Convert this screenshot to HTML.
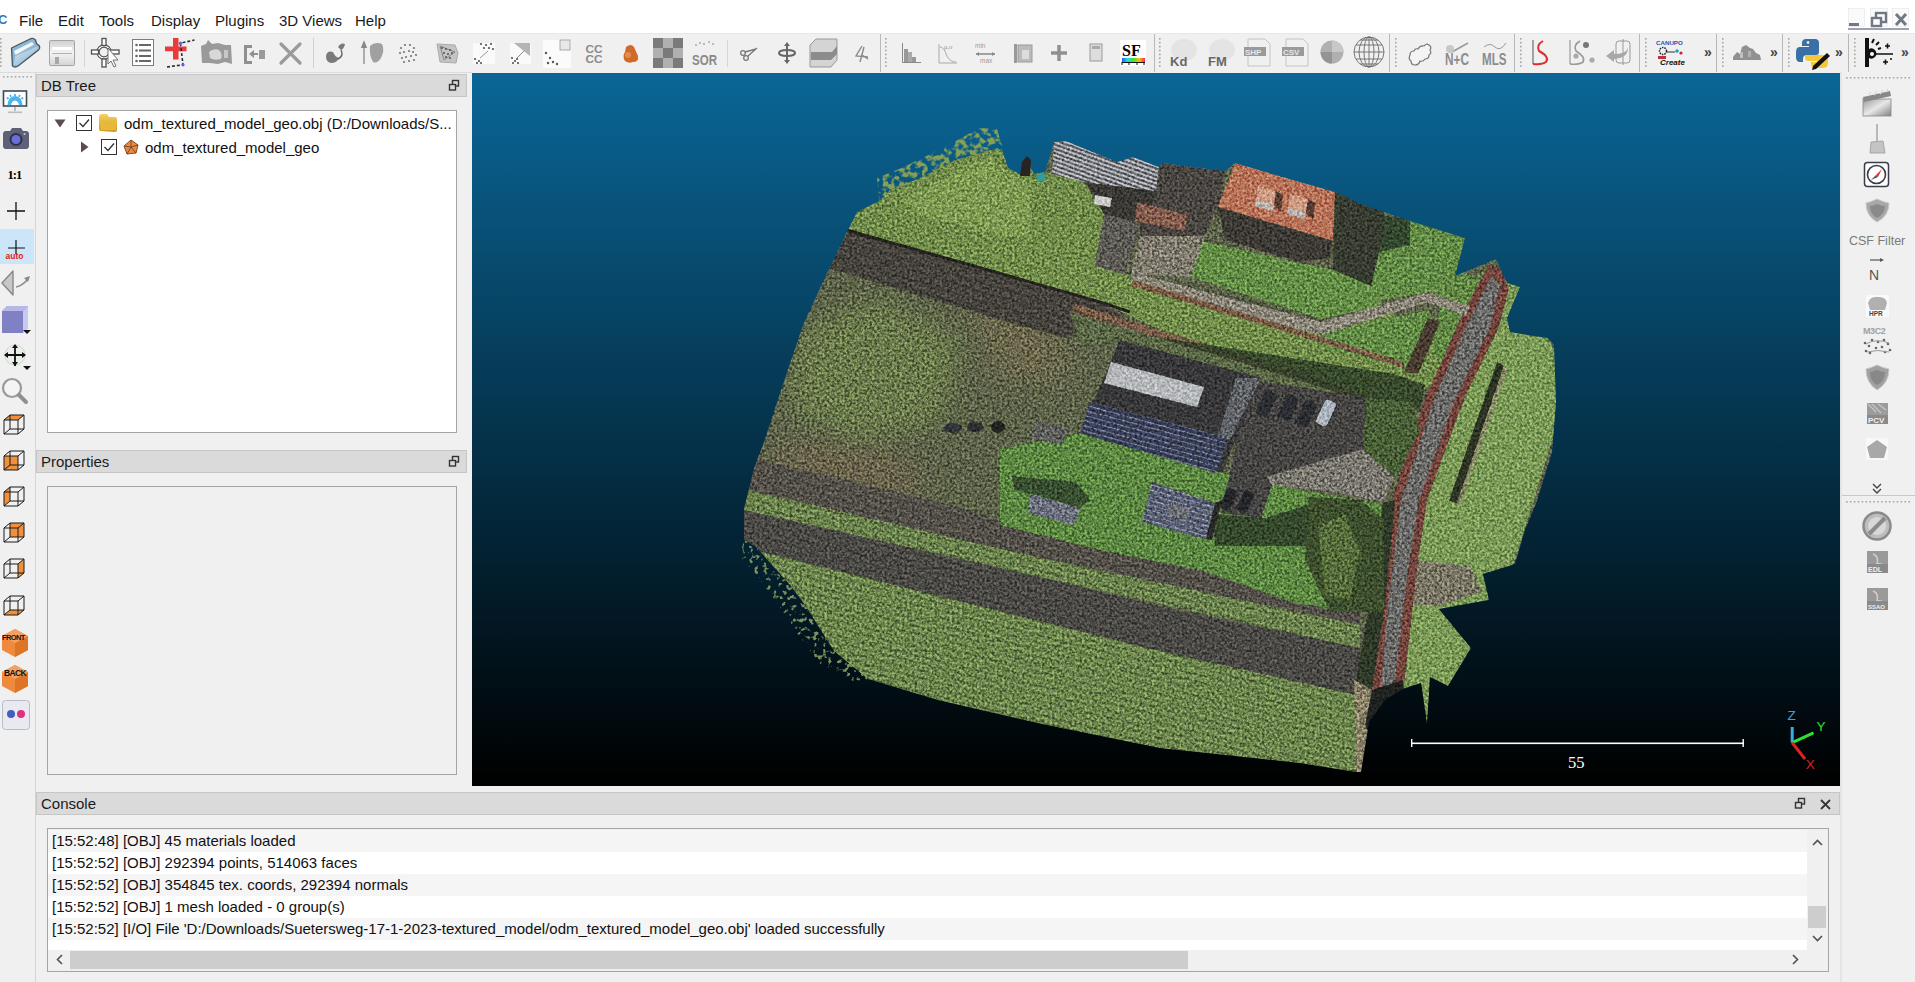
<!DOCTYPE html><html><head><meta charset="utf-8"><style>
html,body{margin:0;padding:0;}
body{width:1915px;height:982px;position:relative;overflow:hidden;background:#f0f0f0;font-family:"Liberation Sans",sans-serif;font-size:15px;color:#000;}
.t{position:absolute;white-space:nowrap;line-height:18px;}
svg{overflow:visible}
</style></head><body>

<div style="position:absolute;left:0px;top:0px;width:1915px;height:33px;background:#fff"></div>
<div class="t" style="left:19px;top:12px;color:#1a1a1a">File</div>
<div class="t" style="left:58px;top:12px;color:#1a1a1a">Edit</div>
<div class="t" style="left:99px;top:12px;color:#1a1a1a">Tools</div>
<div class="t" style="left:151px;top:12px;color:#1a1a1a">Display</div>
<div class="t" style="left:215px;top:12px;color:#1a1a1a">Plugins</div>
<div class="t" style="left:279px;top:12px;color:#1a1a1a">3D Views</div>
<div class="t" style="left:355px;top:12px;color:#1a1a1a">Help</div>
<div style="position:absolute;left:0px;top:33px;width:1915px;height:39px;background:#f0f0f0;border-top:1px solid #e8e8e8;box-sizing:border-box"></div>
<svg style="position:absolute;left:0;top:0" width="1915" height="72" viewBox="0 0 1915 72"><rect x="0" y="38" width="1.6" height="1.6" fill="#a4a4a4"/><rect x="0" y="41.9" width="1.6" height="1.6" fill="#a4a4a4"/><rect x="0" y="45.8" width="1.6" height="1.6" fill="#a4a4a4"/><rect x="0" y="49.699999999999996" width="1.6" height="1.6" fill="#a4a4a4"/><rect x="0" y="53.599999999999994" width="1.6" height="1.6" fill="#a4a4a4"/><rect x="0" y="57.49999999999999" width="1.6" height="1.6" fill="#a4a4a4"/><rect x="0" y="61.39999999999999" width="1.6" height="1.6" fill="#a4a4a4"/><rect x="0" y="65.3" width="1.6" height="1.6" fill="#a4a4a4"/><rect x="84" y="40" width="1" height="27" fill="#d4d4d4"/><rect x="313" y="38" width="1" height="30" fill="#d0d0d0"/><rect x="727" y="40" width="1" height="27" fill="#d4d4d4"/><rect x="880" y="34" width="1" height="38" fill="#b8b8b8"/><rect x="885" y="38" width="1.6" height="1.6" fill="#a4a4a4"/><rect x="885" y="41.9" width="1.6" height="1.6" fill="#a4a4a4"/><rect x="885" y="45.8" width="1.6" height="1.6" fill="#a4a4a4"/><rect x="885" y="49.699999999999996" width="1.6" height="1.6" fill="#a4a4a4"/><rect x="885" y="53.599999999999994" width="1.6" height="1.6" fill="#a4a4a4"/><rect x="885" y="57.49999999999999" width="1.6" height="1.6" fill="#a4a4a4"/><rect x="885" y="61.39999999999999" width="1.6" height="1.6" fill="#a4a4a4"/><rect x="885" y="65.3" width="1.6" height="1.6" fill="#a4a4a4"/><rect x="1154" y="34" width="1" height="38" fill="#b8b8b8"/><rect x="1159" y="38" width="1.6" height="1.6" fill="#a4a4a4"/><rect x="1159" y="41.9" width="1.6" height="1.6" fill="#a4a4a4"/><rect x="1159" y="45.8" width="1.6" height="1.6" fill="#a4a4a4"/><rect x="1159" y="49.699999999999996" width="1.6" height="1.6" fill="#a4a4a4"/><rect x="1159" y="53.599999999999994" width="1.6" height="1.6" fill="#a4a4a4"/><rect x="1159" y="57.49999999999999" width="1.6" height="1.6" fill="#a4a4a4"/><rect x="1159" y="61.39999999999999" width="1.6" height="1.6" fill="#a4a4a4"/><rect x="1159" y="65.3" width="1.6" height="1.6" fill="#a4a4a4"/><rect x="1389" y="34" width="1" height="38" fill="#b8b8b8"/><rect x="1395" y="38" width="1.6" height="1.6" fill="#a4a4a4"/><rect x="1395" y="41.9" width="1.6" height="1.6" fill="#a4a4a4"/><rect x="1395" y="45.8" width="1.6" height="1.6" fill="#a4a4a4"/><rect x="1395" y="49.699999999999996" width="1.6" height="1.6" fill="#a4a4a4"/><rect x="1395" y="53.599999999999994" width="1.6" height="1.6" fill="#a4a4a4"/><rect x="1395" y="57.49999999999999" width="1.6" height="1.6" fill="#a4a4a4"/><rect x="1395" y="61.39999999999999" width="1.6" height="1.6" fill="#a4a4a4"/><rect x="1395" y="65.3" width="1.6" height="1.6" fill="#a4a4a4"/><rect x="1514" y="34" width="1" height="38" fill="#b8b8b8"/><rect x="1520" y="38" width="1.6" height="1.6" fill="#a4a4a4"/><rect x="1520" y="41.9" width="1.6" height="1.6" fill="#a4a4a4"/><rect x="1520" y="45.8" width="1.6" height="1.6" fill="#a4a4a4"/><rect x="1520" y="49.699999999999996" width="1.6" height="1.6" fill="#a4a4a4"/><rect x="1520" y="53.599999999999994" width="1.6" height="1.6" fill="#a4a4a4"/><rect x="1520" y="57.49999999999999" width="1.6" height="1.6" fill="#a4a4a4"/><rect x="1520" y="61.39999999999999" width="1.6" height="1.6" fill="#a4a4a4"/><rect x="1520" y="65.3" width="1.6" height="1.6" fill="#a4a4a4"/><rect x="1639" y="34" width="1" height="38" fill="#b8b8b8"/><rect x="1645" y="38" width="1.6" height="1.6" fill="#a4a4a4"/><rect x="1645" y="41.9" width="1.6" height="1.6" fill="#a4a4a4"/><rect x="1645" y="45.8" width="1.6" height="1.6" fill="#a4a4a4"/><rect x="1645" y="49.699999999999996" width="1.6" height="1.6" fill="#a4a4a4"/><rect x="1645" y="53.599999999999994" width="1.6" height="1.6" fill="#a4a4a4"/><rect x="1645" y="57.49999999999999" width="1.6" height="1.6" fill="#a4a4a4"/><rect x="1645" y="61.39999999999999" width="1.6" height="1.6" fill="#a4a4a4"/><rect x="1645" y="65.3" width="1.6" height="1.6" fill="#a4a4a4"/><rect x="1716" y="34" width="1" height="38" fill="#b8b8b8"/><rect x="1722" y="38" width="1.6" height="1.6" fill="#a4a4a4"/><rect x="1722" y="41.9" width="1.6" height="1.6" fill="#a4a4a4"/><rect x="1722" y="45.8" width="1.6" height="1.6" fill="#a4a4a4"/><rect x="1722" y="49.699999999999996" width="1.6" height="1.6" fill="#a4a4a4"/><rect x="1722" y="53.599999999999994" width="1.6" height="1.6" fill="#a4a4a4"/><rect x="1722" y="57.49999999999999" width="1.6" height="1.6" fill="#a4a4a4"/><rect x="1722" y="61.39999999999999" width="1.6" height="1.6" fill="#a4a4a4"/><rect x="1722" y="65.3" width="1.6" height="1.6" fill="#a4a4a4"/><rect x="1782" y="34" width="1" height="38" fill="#b8b8b8"/><rect x="1788" y="38" width="1.6" height="1.6" fill="#a4a4a4"/><rect x="1788" y="41.9" width="1.6" height="1.6" fill="#a4a4a4"/><rect x="1788" y="45.8" width="1.6" height="1.6" fill="#a4a4a4"/><rect x="1788" y="49.699999999999996" width="1.6" height="1.6" fill="#a4a4a4"/><rect x="1788" y="53.599999999999994" width="1.6" height="1.6" fill="#a4a4a4"/><rect x="1788" y="57.49999999999999" width="1.6" height="1.6" fill="#a4a4a4"/><rect x="1788" y="61.39999999999999" width="1.6" height="1.6" fill="#a4a4a4"/><rect x="1788" y="65.3" width="1.6" height="1.6" fill="#a4a4a4"/><rect x="1848" y="34" width="1" height="38" fill="#b8b8b8"/><rect x="1854" y="38" width="1.6" height="1.6" fill="#a4a4a4"/><rect x="1854" y="41.9" width="1.6" height="1.6" fill="#a4a4a4"/><rect x="1854" y="45.8" width="1.6" height="1.6" fill="#a4a4a4"/><rect x="1854" y="49.699999999999996" width="1.6" height="1.6" fill="#a4a4a4"/><rect x="1854" y="53.599999999999994" width="1.6" height="1.6" fill="#a4a4a4"/><rect x="1854" y="57.49999999999999" width="1.6" height="1.6" fill="#a4a4a4"/><rect x="1854" y="61.39999999999999" width="1.6" height="1.6" fill="#a4a4a4"/><rect x="1854" y="65.3" width="1.6" height="1.6" fill="#a4a4a4"/><defs><linearGradient id="fold" x1="0" y1="0" x2="1" y2="1"><stop offset="0" stop-color="#d8e8f4"/><stop offset="1" stop-color="#86b0cc"/></linearGradient><linearGradient id="sav" x1="0" y1="0" x2="0" y2="1"><stop offset="0" stop-color="#d0d0d0"/><stop offset="0.5" stop-color="#f4f4f4"/><stop offset="1" stop-color="#d4d4d4"/></linearGradient></defs><path d="M11.5,48 L30,39 Q33,37.5 35.5,40 L36.5,43.5 L39.5,46 Q40.5,48 38.5,50 L18,66 Q15,68 12.5,66 Z" fill="#8fb6d2" stroke="#46545e" stroke-width="1.3" stroke-linejoin="round"/><path d="M14,51 L32,42 L34,44.5 L15.5,55 Z" fill="#f2f6f9"/><path d="M13.5,65 L15.5,56 L37,46.5 L38.5,48.5 L18,65 Z" fill="url(#fold)"/><rect x="49.5" y="40.5" width="25" height="25" rx="1" fill="url(#sav)" stroke="#a4a4a4"/><rect x="52" y="47" width="20" height="3" fill="#fff"/><rect x="52" y="53" width="20" height="1" fill="#b0b0b0"/><rect x="55" y="57" width="4" height="7" fill="#a8a8a8"/><g stroke="#505050" stroke-width="1.3" fill="#fff"><circle cx="104" cy="52" r="6" fill="none" stroke-width="3.4"/><circle cx="104" cy="52" r="6" fill="none" stroke="#fff" stroke-width="1.2"/><rect x="102" y="38.5" width="4" height="7" /><rect x="102" y="59" width="4" height="8"/><rect x="91.5" y="50" width="7" height="4"/><rect x="110" y="50" width="9" height="4"/></g><path d="M108,48 L108,64 L111,61 L114,67 L116,66 L113,60 L118,60 Z" fill="#fff" stroke="#707070" stroke-width="1"/><rect x="132.5" y="39.5" width="21" height="26" fill="#fff" stroke="#7c7c7c"/><circle cx="136.5" cy="45" r="1.3" fill="#666"/><rect x="139" y="44" width="12" height="2" fill="#666"/><circle cx="136.5" cy="50.5" r="1.3" fill="#666"/><rect x="139" y="49.5" width="12" height="2" fill="#666"/><circle cx="136.5" cy="56" r="1.3" fill="#666"/><rect x="139" y="55" width="12" height="2" fill="#666"/><circle cx="136.5" cy="61" r="1.3" fill="#666"/><rect x="139" y="60" width="12" height="2" fill="#666"/><path d="M173,38 h5.5 v8.4 h8 v4.8 h-8 v8.3 h-5.5 v-8.3 h-8 v-4.8 h8 Z" fill="#ea3b3b"/><path d="M167,67 L183,64.8 L180.4,43.2 L194.5,40" fill="none" stroke="#2a2a3a" stroke-width="1.6" stroke-dasharray="3,2"/><circle cx="183" cy="64.8" r="1.6" fill="#6060e0"/><circle cx="180.4" cy="43.2" r="1.6" fill="#6060e0"/><path d="M201,46 L206,44 L208,40 L212,44 L218,43 L225,45 L231,45 L232,64 L225,62 L218,64 L210,63 L202,63 Z" fill="#9a9a9a"/><path d="M209,52 Q213,48 219,50 Q223,54 221,59 Q214,61 210,58 Z" fill="#d8d8d8"/><rect x="224" y="50" width="4" height="8" fill="#c8c8c8"/><path d="M244,45 h8 v3 h-5 v13 h5 v3 h-8 Z" fill="#909090"/><path d="M249,54 l5,-4 v3 h4 v2 h-4 v3 Z" fill="#909090"/><rect x="259" y="50" width="6" height="9" fill="#9a9a9a"/><path d="M281,44 L300,63 M300,44 L281,63" stroke="#9a9a9a" stroke-width="3.2" stroke-linecap="round"/><path d="M326,56 Q327,50 333,52 Q335,57 339,58 Q337,63 331,63 Q326,62 326,56 Z" fill="#7a7a7a"/><path d="M338,47 Q341,42 345,44 Q344,49 341,50 Z" fill="#7a7a7a"/><path d="M341,50 Q344,56 338,59" fill="none" stroke="#666" stroke-width="1.4"/><path d="M364,64 V44 M361.5,48 L364,42 L366.5,48" stroke="#888" stroke-width="1.3" fill="#888"/><path d="M370,46 Q375,41 382,44 Q385,50 381,58 Q377,64 373,62 Q369,55 370,46 Z" fill="#a0a0a0"/><circle cx="401" cy="48" r="1.1" fill="#777"/><circle cx="405" cy="45" r="1.1" fill="#777"/><circle cx="410" cy="45" r="1.1" fill="#777"/><circle cx="414" cy="48" r="1.1" fill="#777"/><circle cx="400" cy="53" r="1.1" fill="#777"/><circle cx="404" cy="52" r="1.1" fill="#777"/><circle cx="409" cy="51" r="1.1" fill="#777"/><circle cx="413" cy="52" r="1.1" fill="#777"/><circle cx="416" cy="55" r="1.1" fill="#777"/><circle cx="402" cy="58" r="1.1" fill="#777"/><circle cx="406" cy="57" r="1.1" fill="#777"/><circle cx="411" cy="56" r="1.1" fill="#777"/><circle cx="404" cy="62" r="1.1" fill="#777"/><circle cx="409" cy="61" r="1.1" fill="#777"/><circle cx="414" cy="60" r="1.1" fill="#777"/><path d="M437,44 L455,45 L458,53 L456,63 L440,62 Z" fill="#c4c4c4" stroke="#aaa"/><path d="M440,46 L455,52 L444,60 Z" fill="none" stroke="#777" stroke-width="0.8"/><circle cx="442" cy="48" r="1" fill="#555"/><circle cx="446" cy="49" r="1" fill="#555"/><circle cx="450" cy="50" r="1" fill="#555"/><circle cx="444" cy="53" r="1" fill="#555"/><circle cx="448" cy="54" r="1" fill="#555"/><circle cx="452" cy="53" r="1" fill="#555"/><circle cx="446" cy="57" r="1" fill="#555"/><circle cx="450" cy="58" r="1" fill="#555"/><rect x="473" y="43" width="22" height="21" fill="#fafafa"/><circle cx="481" cy="44" r="1.1" fill="#555"/><circle cx="486" cy="45" r="1.1" fill="#555"/><circle cx="491" cy="44" r="1.1" fill="#555"/><circle cx="484" cy="48" r="1.1" fill="#555"/><circle cx="489" cy="48" r="1.1" fill="#555"/><circle cx="493" cy="49" r="1.1" fill="#555"/><circle cx="475" cy="59" r="1.1" fill="#555"/><circle cx="479" cy="61" r="1.1" fill="#555"/><circle cx="477" cy="63" r="1.1" fill="#555"/><circle cx="481" cy="63" r="1.1" fill="#555"/><path d="M480,58 L488,51" stroke="#999" stroke-width="1"/><rect x="510" y="43" width="21" height="21" fill="#fafafa"/><path d="M514,43 L530,43 L530,56 Z" fill="#b4b4b4"/><circle cx="512" cy="58" r="1.1" fill="#555"/><circle cx="515" cy="61" r="1.1" fill="#555"/><circle cx="513" cy="63" r="1.1" fill="#555"/><circle cx="518" cy="63" r="1.1" fill="#555"/><circle cx="517" cy="59" r="1.1" fill="#555"/><path d="M517,58 L524,51" stroke="#888" stroke-width="1"/><rect x="543" y="40" width="28" height="28" fill="#fbfbfb"/><rect x="560" y="40" width="10" height="10" fill="#e8e8e8" stroke="#999" stroke-width="0.8"/><circle cx="546" cy="53" r="1.2" fill="#555"/><circle cx="550" cy="58" r="1.2" fill="#555"/><circle cx="548" cy="63" r="1.2" fill="#555"/><circle cx="553" cy="62" r="1.2" fill="#555"/><circle cx="557" cy="64" r="1.2" fill="#555"/><text x="585.5" y="52.5" font-family="Liberation Sans" font-size="11.5" font-weight="bold" fill="#8a8a8a" textLength="17" lengthAdjust="spacingAndGlyphs">CC</text><text x="585.5" y="62.5" font-family="Liberation Sans" font-size="11.5" font-weight="bold" fill="#8a8a8a" textLength="17" lengthAdjust="spacingAndGlyphs">CC</text><path d="M626,47 Q631,43 634,47 L638,56 Q639,62 633,62 Q629,64 625,61 Q622,56 625,52 Z" fill="#d06a28"/><circle cx="628" cy="55" r="3" fill="#e88a48"/><rect x="653" y="38" width="10" height="10" fill="#7a7a7a"/><rect x="653" y="48" width="10" height="10" fill="#b0b0b0"/><rect x="653" y="58" width="10" height="10" fill="#7a7a7a"/><rect x="663" y="38" width="10" height="10" fill="#b0b0b0"/><rect x="663" y="48" width="10" height="10" fill="#7a7a7a"/><rect x="663" y="58" width="10" height="10" fill="#b0b0b0"/><rect x="673" y="38" width="10" height="10" fill="#7a7a7a"/><rect x="673" y="48" width="10" height="10" fill="#b0b0b0"/><rect x="673" y="58" width="10" height="10" fill="#7a7a7a"/><text x="692" y="65" font-family="Liberation Sans" font-size="15" font-weight="bold" fill="#8a8a8a" textLength="25" lengthAdjust="spacingAndGlyphs">SOR</text><circle cx="696" cy="45" r="1" fill="#aaa"/><circle cx="700" cy="43" r="1" fill="#aaa"/><circle cx="704" cy="44" r="1" fill="#aaa"/><circle cx="709" cy="42" r="1" fill="#aaa"/><circle cx="713" cy="44" r="1" fill="#aaa"/><g fill="none" stroke="#777" stroke-width="1.3"><circle cx="743" cy="53" r="2.3"/><circle cx="746" cy="58" r="2.3"/><path d="M745,52 L756,49 M748,56 L757,48"/></g><g stroke="#666" stroke-width="2" fill="none"><path d="M787,44 V62"/><ellipse cx="787" cy="53" rx="8" ry="3"/></g><path d="M784,46 L787,42 L790,46 Z M784,60 L787,64 L790,60 Z" fill="#666"/><path d="M810,45 L816,39 L837,39 L837,60 L831,67 L810,67 Z" fill="#d4d4d4" stroke="#999" stroke-width="1"/><path d="M810,56 L831,56 L837,50" fill="none" stroke="#999"/><path d="M811,52 L832,52 L837,46 L837,54 L831,60 L811,60 Z" fill="#8c8c8c"/><path d="M862,46 L856,56 L868,57 M860,62 L864,47 M862,55 L868,59" fill="none" stroke="#8a8a8a" stroke-width="1.4"/><path d="M902.5,43 V62.5 H921" stroke="#888" fill="none" stroke-width="1"/><rect x="904" y="49" width="4" height="13" fill="#999"/><rect x="908" y="52" width="4" height="10" fill="#aaa"/><rect x="912" y="57" width="4" height="5" fill="#999"/><path d="M939,44 V63 H957" stroke="#aaa" fill="none"/><path d="M940,47 Q944,47 947,56 Q950,62 956,62" fill="none" stroke="#aaa"/><text x="944" y="49" font-family="Liberation Serif" font-size="6.5" font-weight="normal" fill="#999" >μ,σ</text><text x="975" y="48" font-family="Liberation Sans" font-size="6.5" font-weight="normal" fill="#999" >min</text><text x="980" y="63" font-family="Liberation Sans" font-size="6.5" font-weight="normal" fill="#999" >max</text><path d="M976,54 H995" stroke="#888" stroke-width="1.5"/><path d="M976,54 l3,-2 v4 Z M995,54 l-3,-2 v4 Z" fill="#888"/><rect x="1014" y="44" width="3" height="19" fill="#999"/><rect x="1018" y="45" width="14" height="17" fill="#bbb" stroke="#999"/><rect x="1022" y="50" width="7" height="9" fill="#ddd"/><path d="M1059,45 V61 M1051,53 H1067" stroke="#909090" stroke-width="3.5"/><rect x="1090" y="44" width="12" height="17" fill="#ddd" stroke="#999"/><rect x="1092" y="46" width="8" height="3" fill="#aaa"/><rect x="1120" y="40" width="26" height="26" fill="#fff"/><text x="1122" y="56" font-family="Liberation Serif" font-size="16" font-weight="bold" fill="#000" >SF</text><defs><linearGradient id="rb"><stop offset="0" stop-color="#2060ff"/><stop offset="0.25" stop-color="#20e0e0"/><stop offset="0.5" stop-color="#40e040"/><stop offset="0.75" stop-color="#ffc000"/><stop offset="1" stop-color="#ff2060"/></linearGradient></defs><rect x="1122" y="58" width="23" height="4" fill="url(#rb)"/><path d="M1122,62 V65 M1129,62 V65 M1137,62 V65 M1144,62 V65 M1122,62.5 H1145" stroke="#111" stroke-width="1"/><ellipse cx="1184" cy="50" rx="13" ry="11" fill="#e4e4e4"/><text x="1170" y="66" font-family="Liberation Sans" font-size="13" font-weight="bold" fill="#686868" >Kd</text><ellipse cx="1222" cy="50" rx="13" ry="11" fill="#e4e4e4"/><text x="1208" y="66" font-family="Liberation Sans" font-size="13" font-weight="bold" fill="#686868" >FM</text><path d="M1248,39 h17 l5,5 v22 h-22 Z" fill="#f0f0f0" stroke="#c4c4c4"/><rect x="1244" y="47" width="22" height="9" fill="#9a9a9a"/><text x="1245" y="55" font-family="Liberation Sans" font-size="8" font-weight="bold" fill="#e8e8e8" >SHP</text><path d="M1286,39 h17 l5,5 v22 h-22 Z" fill="#f0f0f0" stroke="#c4c4c4"/><rect x="1282" y="47" width="22" height="9" fill="#9a9a9a"/><text x="1283" y="55" font-family="Liberation Sans" font-size="8" font-weight="bold" fill="#e8e8e8" >CSV</text><circle cx="1332" cy="52" r="11.5" fill="#b0b0b0"/><path d="M1332,52 L1332,40.5 A11.5,11.5 0 0 1 1343.5,52 Z" fill="#c8c8c8"/><path d="M1332,52 L1332,63.5 A11.5,11.5 0 0 1 1320.5,52 Z" fill="#949494"/><g fill="none" stroke="#6a6a6a" stroke-width="0.9"><circle cx="1369" cy="52" r="15"/><ellipse cx="1369" cy="52" rx="5" ry="15"/><ellipse cx="1369" cy="52" rx="10" ry="15"/><path d="M1369,37 V67 M1354,52 H1384 M1356,45 H1382 M1356,59 H1382 M1360,40 H1378 M1360,64 H1378"/></g><path d="M1410,55 q0,-4 4,-4 q1,-3 4,-2 q2,-4 6,-3 q2,-3 5,-1 q3,2 1,5 q2,3 -1,5 q0,4 -4,4 q-2,3 -5,2 q-1,4 -5,4 q-4,0 -4,-4 q-3,-2 -1,-6 Z" fill="#f4f4f4" stroke="#777" stroke-width="1.2"/><text x="1445" y="65" font-family="Liberation Sans" font-size="16" font-weight="bold" fill="#8c8c8c" textLength="24" lengthAdjust="spacingAndGlyphs">N+C</text><path d="M1452,52 L1468,43" stroke="#999" stroke-width="1.5"/><circle cx="1450" cy="49" r="4" fill="#c8c8c8"/><text x="1482" y="65" font-family="Liberation Sans" font-size="16" font-weight="bold" fill="#8c8c8c" textLength="24.5" lengthAdjust="spacingAndGlyphs">MLS</text><path d="M1484,47 Q1490,42 1495,47 T1506,43" fill="none" stroke="#999" stroke-width="1"/><path d="M1533,40 V64" stroke="#555" stroke-width="1"/><path d="M1543,41 Q1536,45 1539,51 Q1550,57 1546,62 Q1542,65 1533,64" fill="none" stroke="#d83030" stroke-width="2"/><path d="M1570,40 V64" stroke="#888" stroke-width="1"/><path d="M1580,41 Q1573,45 1576,51 Q1586,57 1583,62 Q1579,65 1570,64" fill="none" stroke="#999" stroke-width="1.6"/><circle cx="1586" cy="45" r="3" fill="#777"/><circle cx="1576" cy="56" r="2.6" fill="#aaa"/><circle cx="1592" cy="60" r="2.6" fill="#aaa"/><g fill="none" stroke="#999" stroke-width="1"><rect x="1616" y="41" width="14" height="22" rx="3"/><path d="M1623,39 V65"/></g><path d="M1606,56 L1614,50 L1614,54 Q1626,54 1628,48 Q1628,58 1614,59 L1614,62 Z" fill="#a8a8a8"/><text x="1656" y="45" font-family="Liberation Sans" font-size="6.2" font-weight="bold" fill="#3050b0" >CANUPO</text><circle cx="1663" cy="51" r="3.5" fill="none" stroke="#223" stroke-width="1.5" stroke-dasharray="1.5,1"/><path d="M1667,52 H1675" stroke="#333"/><circle cx="1677" cy="51" r="1.8" fill="#20a0c0"/><circle cx="1681" cy="53" r="1.6" fill="#d02040"/><rect x="1658" y="56" width="8" height="3" fill="#c03040"/><text x="1660" y="65" font-family="Liberation Sans" font-size="8" font-weight="bold" fill="#111" font-style="italic">Create</text><text x="1704" y="57" font-family="Liberation Sans" font-size="14" font-weight="bold" fill="#444" >»</text><path d="M1733,57 L1737,52 L1740,54 L1742,47 L1746,45 L1750,48 L1753,49 L1756,53 L1760,55 L1761,60 L1733,60 Z" fill="#909090"/><rect x="1740" y="52" width="3" height="6" fill="#c0c0c0"/><rect x="1748" y="51" width="3" height="6" fill="#b0b0b0"/><text x="1770" y="57" font-family="Liberation Sans" font-size="14" font-weight="bold" fill="#444" >»</text><path d="M1806,39 h9 q4,0 4,4 v9 q0,3 -3,3 h-9 q-4,0 -4,4 v3 h-3 q-4,0 -4,-5 v-5 q0,-5 4,-5 h9 v-1 h-7 v-3 q0,-4 4,-4 Z" fill="#3a70a8"/><circle cx="1808" cy="42.5" r="1.3" fill="#fff"/><path d="M1816,55 h7 q5,0 5,5 v3 q0,5 -5,5 h-8 q-4,0 -4,-4 v-2 h6 v-1 h-8 q-4,0 -4,-3 v-3 Z" fill="#f4c838"/><path d="M1813,66 L1827,53 L1830,56 L1816,69 L1812,70 Z" fill="#111"/><text x="1835" y="57" font-family="Liberation Sans" font-size="14" font-weight="bold" fill="#444" >»</text><path d="M1865,38 h4 v11 q3,-2 6,1 q3,4 0,7 q-3,3 -6,1 v9 h-4 Z" fill="#111"/><circle cx="1872" cy="54" r="2" fill="#fff"/><path d="M1876,54 H1893" stroke="#111" stroke-width="1.5"/><path d="M1872,43 l2,-4 M1876,45 l3,-3 M1878,49 l3,-1" stroke="#111" stroke-width="2"/><path d="M1885,46 h5 M1887.5,43.5 v5 M1883,62 h5 M1885.5,59.5 v5" stroke="#111" stroke-width="1.6"/><circle cx="1891" cy="59" r="1" fill="#111"/><text x="1901" y="57" font-family="Liberation Sans" font-size="14" font-weight="bold" fill="#444" >»</text></svg>
<div style="position:absolute;left:0px;top:72px;width:35px;height:910px;background:#f0f0f0"></div>
<div style="position:absolute;left:35px;top:72px;width:1px;height:910px;background:#d4d4d4"></div>
<div style="position:absolute;left:0px;top:72px;width:472px;height:1px;background:#dcdcdc"></div>
<svg style="position:absolute;left:0;top:0" width="36" height="982" viewBox="0 0 36 982"><rect x="3" y="76" width="1.6" height="1.6" fill="#a8a8a8"/><rect x="6.9" y="76" width="1.6" height="1.6" fill="#a8a8a8"/><rect x="10.8" y="76" width="1.6" height="1.6" fill="#a8a8a8"/><rect x="14.700000000000001" y="76" width="1.6" height="1.6" fill="#a8a8a8"/><rect x="18.6" y="76" width="1.6" height="1.6" fill="#a8a8a8"/><rect x="22.5" y="76" width="1.6" height="1.6" fill="#a8a8a8"/><rect x="26.4" y="76" width="1.6" height="1.6" fill="#a8a8a8"/><rect x="30.299999999999997" y="76" width="1.6" height="1.6" fill="#a8a8a8"/><rect x="3.5" y="91" width="23" height="15" fill="#fff" stroke="#3c4a5a" stroke-width="1.6"/><path d="M7.5,105 Q8,96.5 15,96 Q22,96.5 22.5,105 Z" fill="#4ab4ec"/><path d="M11,105 Q11.5,101 15,100.5 Q18.5,101 19,105 Z" fill="#fff"/><path d="M8.5,99 l-1.5,-1.5 M21.5,99 l1.5,-1.5 M15,96 v-2 M11,96.8 l-1,-1.8 M19,96.8 l1,-1.8" stroke="#4ab4ec" stroke-width="1.8"/><rect x="14" y="107" width="2" height="4" fill="#b8bcc4"/><rect x="8" y="111.5" width="14" height="1.6" fill="#b8bcc4"/><path d="M3,134 q0,-3 3,-3 h4 l2,-3 h9 l2,3 h3 q3,0 3,3 v12 q0,3 -3,3 h-20 q-3,0 -3,-3 Z" fill="#5c6178"/><circle cx="16" cy="139.5" r="6.5" fill="#2e3248"/><circle cx="16" cy="139.5" r="4.5" fill="#6a70d8"/><circle cx="24.5" cy="134" r="1" fill="#ccc"/><text x="7.5" y="179" font-family="Liberation Serif" font-size="12.5" font-weight="bold" fill="#000" letter-spacing="-1">1:1</text><path d="M16,202 V220 M7,211 H25" stroke="#111" stroke-width="1.3"/><rect x="0" y="229" width="34" height="35" fill="#cde5f8"/><path d="M16,240 V254 M8,248 H25" stroke="#111" stroke-width="1.2"/><text x="5.5" y="258.5" font-family="Liberation Sans" font-size="8.5" font-weight="bold" fill="#e02020" >auto</text><path d="M2,283 L13,271 L13,295 Z" fill="#c8c8c8" stroke="#888" stroke-width="1.4" stroke-linejoin="round"/><path d="M16,287 Q22,286 28,279" fill="none" stroke="#888" stroke-width="1.6"/><path d="M24,278 L30,276 L28,282 Z" fill="#888"/><path d="M2,311 L7,306 L28,306 L28,328 L23,333 L2,333 Z" fill="#9a9ad8"/><path d="M2,311 L23,311 L23,333 L2,333 Z" fill="#8080c4"/><path d="M23,311 L28,306 L28,328 L23,333 Z" fill="#c8c8f0"/><path d="M2,311 L7,306 L28,306 L23,311 Z" fill="#b8b8e8"/><path d="M23,330 L31,330 L27,334 Z" fill="#111"/><circle cx="15" cy="355" r="10" fill="#e8f0e8" stroke="#cfd8cf"/><path d="M15,345 V366 M5,355 H25" stroke="#111" stroke-width="1.8"/><path d="M12,348 L15,344 L18,348 Z M12,362 L15,366 L18,362 Z M8,352 L4,355 L8,358 Z M22,352 L26,355 L22,358 Z" fill="#111"/><path d="M23,366 L31,366 L27,370 Z" fill="#111"/><circle cx="12" cy="388" r="9" fill="#f4f4f4" stroke="#9a9a9a" stroke-width="2.2"/><path d="M19,395 L26,402" stroke="#909090" stroke-width="4" stroke-linecap="round"/><polygon points="4,420 18,420 24,415 10,415" fill="#f0903c"/><line x1="4" y1="420" x2="18" y2="420" stroke="#1a1a1a" stroke-width="1"/><line x1="18" y1="420" x2="18" y2="434" stroke="#1a1a1a" stroke-width="1"/><line x1="18" y1="434" x2="4" y2="434" stroke="#1a1a1a" stroke-width="1"/><line x1="4" y1="434" x2="4" y2="420" stroke="#1a1a1a" stroke-width="1"/><line x1="10" y1="415" x2="24" y2="415" stroke="#1a1a1a" stroke-width="1"/><line x1="24" y1="415" x2="24" y2="429" stroke="#1a1a1a" stroke-width="1"/><line x1="24" y1="429" x2="10" y2="429" stroke="#1a1a1a" stroke-width="1"/><line x1="10" y1="429" x2="10" y2="415" stroke="#1a1a1a" stroke-width="1"/><line x1="4" y1="420" x2="10" y2="415" stroke="#1a1a1a" stroke-width="1"/><line x1="18" y1="420" x2="24" y2="415" stroke="#1a1a1a" stroke-width="1"/><line x1="18" y1="434" x2="24" y2="429" stroke="#1a1a1a" stroke-width="1"/><line x1="4" y1="434" x2="10" y2="429" stroke="#1a1a1a" stroke-width="1"/><polygon points="4,456 18,456 18,470 4,470" fill="#f0903c"/><line x1="4" y1="456" x2="18" y2="456" stroke="#1a1a1a" stroke-width="1"/><line x1="18" y1="456" x2="18" y2="470" stroke="#1a1a1a" stroke-width="1"/><line x1="18" y1="470" x2="4" y2="470" stroke="#1a1a1a" stroke-width="1"/><line x1="4" y1="470" x2="4" y2="456" stroke="#1a1a1a" stroke-width="1"/><line x1="10" y1="451" x2="24" y2="451" stroke="#1a1a1a" stroke-width="1"/><line x1="24" y1="451" x2="24" y2="465" stroke="#1a1a1a" stroke-width="1"/><line x1="24" y1="465" x2="10" y2="465" stroke="#1a1a1a" stroke-width="1"/><line x1="10" y1="465" x2="10" y2="451" stroke="#1a1a1a" stroke-width="1"/><line x1="4" y1="456" x2="10" y2="451" stroke="#1a1a1a" stroke-width="1"/><line x1="18" y1="456" x2="24" y2="451" stroke="#1a1a1a" stroke-width="1"/><line x1="18" y1="470" x2="24" y2="465" stroke="#1a1a1a" stroke-width="1"/><line x1="4" y1="470" x2="10" y2="465" stroke="#1a1a1a" stroke-width="1"/><polygon points="4,492 10,487 10,501 4,506" fill="#f0903c"/><line x1="4" y1="492" x2="18" y2="492" stroke="#1a1a1a" stroke-width="1"/><line x1="18" y1="492" x2="18" y2="506" stroke="#1a1a1a" stroke-width="1"/><line x1="18" y1="506" x2="4" y2="506" stroke="#1a1a1a" stroke-width="1"/><line x1="4" y1="506" x2="4" y2="492" stroke="#1a1a1a" stroke-width="1"/><line x1="10" y1="487" x2="24" y2="487" stroke="#1a1a1a" stroke-width="1"/><line x1="24" y1="487" x2="24" y2="501" stroke="#1a1a1a" stroke-width="1"/><line x1="24" y1="501" x2="10" y2="501" stroke="#1a1a1a" stroke-width="1"/><line x1="10" y1="501" x2="10" y2="487" stroke="#1a1a1a" stroke-width="1"/><line x1="4" y1="492" x2="10" y2="487" stroke="#1a1a1a" stroke-width="1"/><line x1="18" y1="492" x2="24" y2="487" stroke="#1a1a1a" stroke-width="1"/><line x1="18" y1="506" x2="24" y2="501" stroke="#1a1a1a" stroke-width="1"/><line x1="4" y1="506" x2="10" y2="501" stroke="#1a1a1a" stroke-width="1"/><polygon points="10,523 24,523 24,537 10,537" fill="#f0903c"/><line x1="4" y1="528" x2="18" y2="528" stroke="#1a1a1a" stroke-width="1"/><line x1="18" y1="528" x2="18" y2="542" stroke="#1a1a1a" stroke-width="1"/><line x1="18" y1="542" x2="4" y2="542" stroke="#1a1a1a" stroke-width="1"/><line x1="4" y1="542" x2="4" y2="528" stroke="#1a1a1a" stroke-width="1"/><line x1="10" y1="523" x2="24" y2="523" stroke="#1a1a1a" stroke-width="1"/><line x1="24" y1="523" x2="24" y2="537" stroke="#1a1a1a" stroke-width="1"/><line x1="24" y1="537" x2="10" y2="537" stroke="#1a1a1a" stroke-width="1"/><line x1="10" y1="537" x2="10" y2="523" stroke="#1a1a1a" stroke-width="1"/><line x1="4" y1="528" x2="10" y2="523" stroke="#1a1a1a" stroke-width="1"/><line x1="18" y1="528" x2="24" y2="523" stroke="#1a1a1a" stroke-width="1"/><line x1="18" y1="542" x2="24" y2="537" stroke="#1a1a1a" stroke-width="1"/><line x1="4" y1="542" x2="10" y2="537" stroke="#1a1a1a" stroke-width="1"/><polygon points="18,564 24,559 24,573 18,578" fill="#f0903c"/><line x1="4" y1="564" x2="18" y2="564" stroke="#1a1a1a" stroke-width="1"/><line x1="18" y1="564" x2="18" y2="578" stroke="#1a1a1a" stroke-width="1"/><line x1="18" y1="578" x2="4" y2="578" stroke="#1a1a1a" stroke-width="1"/><line x1="4" y1="578" x2="4" y2="564" stroke="#1a1a1a" stroke-width="1"/><line x1="10" y1="559" x2="24" y2="559" stroke="#1a1a1a" stroke-width="1"/><line x1="24" y1="559" x2="24" y2="573" stroke="#1a1a1a" stroke-width="1"/><line x1="24" y1="573" x2="10" y2="573" stroke="#1a1a1a" stroke-width="1"/><line x1="10" y1="573" x2="10" y2="559" stroke="#1a1a1a" stroke-width="1"/><line x1="4" y1="564" x2="10" y2="559" stroke="#1a1a1a" stroke-width="1"/><line x1="18" y1="564" x2="24" y2="559" stroke="#1a1a1a" stroke-width="1"/><line x1="18" y1="578" x2="24" y2="573" stroke="#1a1a1a" stroke-width="1"/><line x1="4" y1="578" x2="10" y2="573" stroke="#1a1a1a" stroke-width="1"/><polygon points="4,615 18,615 24,610 10,610" fill="#f0903c"/><line x1="4" y1="601" x2="18" y2="601" stroke="#1a1a1a" stroke-width="1"/><line x1="18" y1="601" x2="18" y2="615" stroke="#1a1a1a" stroke-width="1"/><line x1="18" y1="615" x2="4" y2="615" stroke="#1a1a1a" stroke-width="1"/><line x1="4" y1="615" x2="4" y2="601" stroke="#1a1a1a" stroke-width="1"/><line x1="10" y1="596" x2="24" y2="596" stroke="#1a1a1a" stroke-width="1"/><line x1="24" y1="596" x2="24" y2="610" stroke="#1a1a1a" stroke-width="1"/><line x1="24" y1="610" x2="10" y2="610" stroke="#1a1a1a" stroke-width="1"/><line x1="10" y1="610" x2="10" y2="596" stroke="#1a1a1a" stroke-width="1"/><line x1="4" y1="601" x2="10" y2="596" stroke="#1a1a1a" stroke-width="1"/><line x1="18" y1="601" x2="24" y2="596" stroke="#1a1a1a" stroke-width="1"/><line x1="18" y1="615" x2="24" y2="610" stroke="#1a1a1a" stroke-width="1"/><line x1="4" y1="615" x2="10" y2="610" stroke="#1a1a1a" stroke-width="1"/><path d="M2,636 L15,629 L28,636 L28,650 L15,657 L2,650 Z" fill="#ef8a3c"/><path d="M15,643 L28,636 L28,650 L15,657 Z" fill="#dd7428"/><path d="M2,636 L15,629 L28,636 L15,643 Z" fill="#f5a060"/><text x="2" y="640" font-family="Liberation Sans" font-size="7.5" font-weight="bold" fill="#111" letter-spacing="-0.6">FRONT</text><path d="M2,672 L15,665 L28,672 L28,686 L15,693 L2,686 Z" fill="#ef8a3c"/><path d="M15,679 L28,672 L28,686 L15,693 Z" fill="#dd7428"/><path d="M2,672 L15,665 L28,672 L15,679 Z" fill="#f5a060"/><text x="4" y="676" font-family="Liberation Sans" font-size="8.5" font-weight="bold" fill="#111" letter-spacing="-0.6">BACK</text><rect x="2.5" y="700.5" width="27" height="29" rx="3" fill="#e8eaf0" stroke="#b8bcc8"/><circle cx="11" cy="714" r="4" fill="#4060c0"/><circle cx="21" cy="714" r="4" fill="#e03080"/></svg>
<div style="position:absolute;left:36px;top:74px;width:431px;height:23px;background:#dadada;border:1px solid #c6c6c6;box-sizing:border-box"></div>
<div class="t" style="left:41px;top:77px;color:#1a1a1a">DB Tree</div>
<div style="position:absolute;left:47px;top:110px;width:410px;height:323px;background:#fff;border:1px solid #a4a4a4;box-sizing:border-box"></div>
<div style="position:absolute;left:36px;top:450px;width:431px;height:23px;background:#dadada;border:1px solid #c6c6c6;box-sizing:border-box"></div>
<div class="t" style="left:41px;top:453px;color:#1a1a1a">Properties</div>
<div style="position:absolute;left:47px;top:486px;width:410px;height:289px;background:#f0f0f0;border:1px solid #a4a4a4;box-sizing:border-box"></div>
<div class="t" style="left:124px;top:115px;color:#111">odm_textured_model_geo.obj (D:/Downloads/S...</div>
<div class="t" style="left:145px;top:139px;color:#111">odm_textured_model_geo</div>
<div style="position:absolute;left:472px;top:73px;width:1368px;height:713px;background:linear-gradient(to bottom,#0a6697 0%,#000 100%)"></div>
<svg style="position:absolute;left:472px;top:73px;filter:saturate(0.8)" width="1368" height="713" viewBox="472 73 1368 713"><defs><filter id="nz" x="472" y="73" width="1368" height="713" filterUnits="userSpaceOnUse" color-interpolation-filters="sRGB"><feTurbulence type="fractalNoise" baseFrequency="0.4" numOctaves="2" seed="7" result="t"/><feColorMatrix in="t" type="matrix" values="0.6 0.4 0 0 0  0.6 0.4 0 0 0  0.6 0.4 0 0 0  0 0 0 0 1"/><feComponentTransfer><feFuncR type="linear" slope="3.2" intercept="-1.1"/><feFuncG type="linear" slope="3.2" intercept="-1.1"/><feFuncB type="linear" slope="3.2" intercept="-1.1"/></feComponentTransfer></filter><clipPath id="mc"><polygon points="764,442 782,387 803,325 827,273 848,230 857,212 879,201 890,190 920,178 955,160 990,150 1002,149 1008,168 1020,174 1026,158 1034,174 1045,172 1054,142 1066,141 1117,162 1133,157 1159,167 1162,163 1225,171 1235,163 1335,192 1345,196 1358,203 1410,221 1465,238 1455,276 1496,259 1507,283 1520,287 1507,318 1510,332 1548,338 1554,345 1556,403 1552,452 1537,501 1525,530 1515,564 1483,574 1489,600 1439,609 1471,648 1448,686 1430,677 1427,724 1421,683 1403,689 1385,700 1369,722 1361,772 1356,772 1300,763 1160,748 1042,724 938,700 868,679 834,651 805,605 790,585 772,565 756,547 744,540 744,509 754,468"/></clipPath></defs>
<g clip-path="url(#mc)">
<polygon points="764,442 782,387 803,325 827,273 848,230 857,212 879,201 890,190 920,178 955,160 990,150 1002,149 1008,168 1020,174 1026,158 1034,174 1045,172 1054,142 1066,141 1117,162 1133,157 1159,167 1162,163 1225,171 1235,163 1335,192 1345,196 1358,203 1410,221 1465,238 1455,276 1496,259 1507,283 1520,287 1507,318 1510,332 1548,338 1554,345 1556,403 1552,452 1537,501 1525,530 1515,564 1483,574 1489,600 1439,609 1471,648 1448,686 1430,677 1427,724 1421,683 1403,689 1385,700 1369,722 1361,772 1356,772 1300,763 1160,748 1042,724 938,700 868,679 834,651 805,605 790,585 772,565 756,547 744,540 744,509 754,468" fill="#5b6343" />
<defs><filter id="bl" x="-50%" y="-50%" width="200%" height="200%"><feGaussianBlur stdDeviation="12"/></filter></defs>
<g filter="url(#bl)" opacity="0.55"><polygon points="800,330 880,300 960,340 940,420 860,440 790,410" fill="#72903f" /><polygon points="780,440 880,450 930,480 900,500 770,480" fill="#7a6448" /><polygon points="960,290 1050,320 1080,380 1000,380" fill="#7a6a4a" /></g>
<polygon points="840,236 848,230 857,212 879,201 890,190 920,178 955,160 990,150 1002,149 1008,168 1020,174 1026,158 1034,174 1045,172 1052,174 1084,182 1104,214 1095,266 1131,275 1321,326 1380,308 1410,322 1440,350 1445,375 1410,400 1380,400 1300,372 1160,330 1100,302 974,266" fill="#6c8e3c" />
<polygon points="900,200 990,155 1010,175 1080,190 1090,240 1000,235 920,215" fill="#7a9c42" />
<polygon points="849,229 974,266 1100,302 1125,316 1065,338 990,317 829,268 820,285" fill="#4a453e" />
<path d="M846,230 L974,266 L1100,302 L1130,312" fill="none" stroke="#25231f" stroke-width="3"/>
<polygon points="1076,304 1240,355 1401,405 1400,412 1240,362 1070,312" fill="#7d5a42" />
<polygon points="1150,336 1248,351 1394,374 1425,385 1420,410 1394,405 1261,378 1150,345" fill="#2c4022" opacity="0.85"/>
<polygon points="1127,272 1260,303 1300,318 1260,318 1133,284" fill="#3a4a2a" opacity="0.6"/>
<polygon points="1070,312 1240,362 1400,412 1420,430 1402,414 1222,380 1120,340 1080,345" fill="#586840" />
<ellipse cx="953" cy="428" rx="9" ry="5" fill="#30343a"/><ellipse cx="975" cy="427" rx="8" ry="5" fill="#2a2e30"/><ellipse cx="998" cy="427" rx="7" ry="6" fill="#1e2420"/>
<polygon points="740,455 955,506 1000,520 1200,565 1360,604 1360,625 1000,549 740,488" fill="#57524a" />
<polygon points="740,488 1000,549 1360,625 1360,648 1000,568 740,509" fill="#6a8844" />
<polygon points="740,509 1000,568 1160,606 1360,648 1360,696 1160,651 758,551 740,556" fill="#4d4b47" />
<polygon points="758,551 1160,651 1360,696 1360,780 1160,760 740,700 740,556" fill="#6c8c44" />
<defs><pattern id="rows" width="8" height="7" patternUnits="userSpaceOnUse" patternTransform="rotate(14)"><rect width="8" height="2.2" fill="#1a2410"/></pattern><pattern id="rows2" width="8" height="9" patternUnits="userSpaceOnUse" patternTransform="rotate(17)"><rect width="8" height="2.5" fill="#1a2410"/></pattern></defs>
<polygon points="758,551 1160,651 1360,696 1360,780 1160,760 740,700 740,556" fill="url(#rows)" opacity="0.22"/>
<polygon points="740,455 1360,604 1360,696 1160,651 758,551 740,556" fill="url(#rows)" opacity="0.18"/>
<polygon points="849,229 1100,302 1065,338 829,268" fill="url(#rows2)" opacity="0.25"/>
<polygon points="1354,680 1372,690 1369,772 1356,772" fill="#8a8060" />
<polygon points="1499,272 1520,287 1507,318 1510,332 1548,338 1555,352 1560,420 1552,440 1531,509 1513,565 1483,574 1489,600 1439,609 1471,648 1448,686 1430,677 1427,724 1421,683 1403,689 1418,559 1427,500 1464,399 1499,319" fill="#759c48" />
<polygon points="1497,362 1504,366 1457,503 1449,501" fill="#2a3420" />
<polygon points="1504,366 1508,368 1460,505 1457,503" fill="#8a8a60" />
<polygon points="1413,560 1470,566 1482,592 1439,606 1410,604" fill="#7a7560" />
<polygon points="1488,265 1500,268 1509,288 1499,327 1464,399 1427,500 1418,559 1405,677 1403,689 1385,700 1369,722 1380,603 1392,500 1425,399 1460,319" fill="#7a4238" />
<polygon points="1492,276 1500,285 1490,327 1455,399 1419,500 1408,570 1395,680 1380,700 1388,603 1401,500 1434,399 1468,322" fill="#6a6a68" />
<polygon points="1372,690 1403,680 1405,700 1385,720 1370,735 1365,725" fill="#1e2220" />
<polygon points="1300,500 1383,503 1392,540 1383,603 1330,610 1298,600 1295,560" fill="#4a6a30" />
<polygon points="1383,503 1395,500 1385,603 1372,690 1356,680 1370,600" fill="#2c3a24" />
<polygon points="1200,241 1366,277 1380,281 1380,306 1321,319 1191,277" fill="#5c9038" />
<polygon points="1354,212 1408,219 1444,229 1467,240 1457,271 1434,291 1380,300 1366,277 1358,224" fill="#5c8e38" />
<polygon points="1354,212 1410,219 1410,245 1380,252 1362,250" fill="#30482a" />
<polygon points="1434,291 1457,271 1476,278 1488,265 1460,319 1440,365 1430,340 1440,310" fill="#5a8a36" />
<polygon points="1306,337 1429,310 1434,329 1407,368 1330,350" fill="#5b8e38" />
<polygon points="1428,318 1440,322 1418,374 1404,372" fill="#4a3a2c" />
<polygon points="1131,272 1321,322 1428,292 1470,306 1466,316 1428,302 1321,335 1131,285" fill="#8c8676" />
<polygon points="1133,280 1260,318 1404,362 1404,368 1260,324 1131,286" fill="#7e5a40" />
<polygon points="1030,183 1052,174 1084,182 1104,214 1095,266 1030,270" fill="#6c8e3c" />
<polygon points="1084,180 1157,190 1159,200 1140,236 1140,223 1104,214" fill="#3a3832" />
<polygon points="1095,195 1112,198 1110,207 1094,204" fill="#c8c8c4" />
<polygon points="1104,214 1140,223 1126,275 1095,266" fill="#5d5a52" />
<polygon points="1140,236 1205,236 1191,277 1131,275" fill="#807a6a" />
<polygon points="1054,142 1066,141 1117,162 1133,157 1159,167 1157,191 1084,182 1052,174" fill="#55575c" />
<defs><pattern id="shp" width="4" height="4" patternUnits="userSpaceOnUse" patternTransform="rotate(20)"><rect width="4" height="2" fill="#d8dce4"/></pattern></defs>
<polygon points="1054,142 1066,141 1117,162 1133,157 1159,167 1157,191 1084,182 1052,174" fill="url(#shp)" opacity="0.75"/>
<polygon points="1159,163 1225,171 1220,201 1204,236 1140,236 1156,194" fill="#4a4540" />
<polygon points="1137,202 1188,215 1184,231 1135,221" fill="#8a5a48" />
<polygon points="1235,163 1335,192 1333,241 1218,207" fill="#c46e4e" />
<polygon points="1258,186 1276,191 1274,205 1256,200" fill="#d89a7c" />
<polygon points="1256,200 1274,205 1273,211 1255,206" fill="#b8b4b0" />
<polygon points="1276,191 1283,195 1281,212 1274,205" fill="#5a3a2e" />
<polygon points="1290,194 1308,199 1306,213 1288,208" fill="#d89a7c" />
<polygon points="1288,208 1306,213 1305,219 1287,214" fill="#b8b4b0" />
<polygon points="1308,199 1315,203 1313,220 1306,213" fill="#5a3a2e" />
<polygon points="1218,207 1333,241 1330,258 1300,262 1225,240" fill="#3e3a34" />
<polygon points="1335,192 1384,205 1384,232 1371,286 1333,270" fill="#363c2e" />
<polygon points="1000,449 1080,433 1222,473 1300,490 1381,504 1381,612 1298,604 1200,570 1100,550 1000,525" fill="#558a34" />
<polygon points="1012,476 1076,482 1090,500 1080,508 1031,494 1014,490" fill="#34502a" />
<polygon points="1213,514 1266,518 1333,497 1332,546 1215,546" fill="#324a26" />
<polygon points="1309,497 1360,500 1384,520 1384,612 1330,612 1305,560" fill="#3a5026" />
<polygon points="1318,525 1345,515 1360,550 1350,600 1325,595" fill="#6a8a3a" opacity="0.5"/>
<polygon points="1366,398 1412,402 1420,430 1400,470 1394,477 1363,449" fill="#45602e" />
<polygon points="1222,380 1254,380 1366,398 1363,449 1394,477 1384,502 1333,492 1272,485 1261,518 1221,513 1236,446" fill="#454441" />
<polygon points="1266,477 1363,449 1394,477 1384,502 1333,492 1272,485" fill="#7a766c" />
<rect x="1260" y="391" width="13" height="26" rx="3" fill="#2a2d33" transform="rotate(25 1267 404)"/>
<rect x="1282" y="395" width="13" height="26" rx="3" fill="#2a2d33" transform="rotate(25 1289 408)"/>
<rect x="1300" y="401" width="13" height="26" rx="3" fill="#2a2d33" transform="rotate(25 1307 414)"/>
<rect x="1320" y="400" width="13" height="26" rx="3" fill="#2a2d33" transform="rotate(25 1327 413)"/>
<rect x="1320" y="400" width="12" height="26" rx="3" fill="#a9b4c0" transform="rotate(25 1326 413)"/>
<rect x="1223" y="488" width="11" height="22" rx="3" fill="#23262c" transform="rotate(25 1228 499)"/>
<rect x="1240" y="490" width="11" height="22" rx="3" fill="#23262c" transform="rotate(25 1245 501)"/>
<polygon points="1120,340 1261,378 1222,473 1080,433" fill="#38383a" />
<polygon points="1090,402 1228,438 1216,473 1080,433" fill="#323a58" />
<defs><pattern id="sp" width="5" height="5" patternUnits="userSpaceOnUse" patternTransform="rotate(15)"><rect width="5" height="1.2" fill="#a8b0c8"/></pattern></defs>
<polygon points="1090,402 1228,438 1216,473 1080,433" fill="url(#sp)" opacity="0.55"/>
<polygon points="1111,362 1204,387 1197,407 1104,383" fill="#b4b8bc" />
<polygon points="1236,378 1261,378 1245,410 1230,440 1218,436" fill="#5e6268" />
<polygon points="1152,482 1215,503 1206,539 1142,522" fill="#505870" />
<polygon points="1152,482 1215,503 1206,539 1142,522" fill="url(#sp)" opacity="0.6"/>
<polygon points="1170,502 1190,508 1186,522 1166,516" fill="#6a6e74" />
<polygon points="1215,503 1222,500 1212,540 1206,539" fill="#2a2a2a" />
<polygon points="1031,494 1080,508 1074,525 1028,513" fill="#6a6f80" />
<polygon points="1035,421 1069,428 1062,445 1031,438" fill="#5e5e5c" />
<rect x="472" y="73" width="1368" height="713" filter="url(#nz)" style="mix-blend-mode:overlay" opacity="0.45"/>
</g>
<defs><filter id="patch" x="850" y="110" width="200" height="110" filterUnits="userSpaceOnUse" color-interpolation-filters="sRGB"><feTurbulence type="fractalNoise" baseFrequency="0.18" numOctaves="2" seed="11" result="t"/><feColorMatrix in="t" type="matrix" values="0 0 0 0 0  0 0 0 0 0  0 0 0 0 0  5 0 0 0 -2.2" result="a"/><feComposite in="SourceGraphic" in2="a" operator="in"/></filter></defs>
<g filter="url(#patch)"><polygon points="877,178 904,167 956,141 979,128 997,129 1003,149 990,151 955,161 920,179 890,191 879,201" fill="#86a246" /></g>
<defs><filter id="patch2" x="720" y="520" width="170" height="180" filterUnits="userSpaceOnUse" color-interpolation-filters="sRGB"><feTurbulence type="fractalNoise" baseFrequency="0.22" numOctaves="2" seed="5" result="t"/><feColorMatrix in="t" type="matrix" values="0 0 0 0 0  0 0 0 0 0  0 0 0 0 0  7 0 0 0 -3.9" result="a"/><feComposite in="SourceGraphic" in2="a" operator="in"/></filter></defs>
<g filter="url(#patch2)"><polygon points="744,540 756,547 772,565 790,585 805,605 834,651 868,679 855,682 820,664 795,630 775,600 758,578 740,556" fill="#7a9450" /></g>
<polygon points="1022,162 1027,156 1031,160 1030,176 1020,176" fill="#2a2420" />
<polygon points="1036,176 1044,172 1046,180 1038,182" fill="#20a0a0" /></svg>
<div style="position:absolute;left:36px;top:792px;width:1804px;height:23px;background:#dadada;border:1px solid #c6c6c6;box-sizing:border-box"></div>
<div class="t" style="left:41px;top:795px;color:#1a1a1a">Console</div>
<div style="position:absolute;left:47px;top:828px;width:1782px;height:144px;background:#f0f0f0;border:1px solid #a4a4a4;box-sizing:border-box"></div>
<div style="position:absolute;left:48px;top:830px;width:1759px;height:22px;background:#f5f5f5"></div>
<div class="t" style="left:52px;top:832px;color:#111">[15:52:48] [OBJ] 45 materials loaded</div>
<div style="position:absolute;left:48px;top:852px;width:1759px;height:22px;background:#fff"></div>
<div class="t" style="left:52px;top:854px;color:#111">[15:52:52] [OBJ] 292394 points, 514063 faces</div>
<div style="position:absolute;left:48px;top:874px;width:1759px;height:22px;background:#f5f5f5"></div>
<div class="t" style="left:52px;top:876px;color:#111">[15:52:52] [OBJ] 354845 tex. coords, 292394 normals</div>
<div style="position:absolute;left:48px;top:896px;width:1759px;height:22px;background:#fff"></div>
<div class="t" style="left:52px;top:898px;color:#111">[15:52:52] [OBJ] 1 mesh loaded - 0 group(s)</div>
<div style="position:absolute;left:48px;top:918px;width:1759px;height:22px;background:#f5f5f5"></div>
<div class="t" style="left:52px;top:920px;color:#111">[15:52:52] [I/O] File 'D:/Downloads/Suetersweg-17-1-2023-textured_model/odm_textured_model_geo.obj' loaded successfully</div>
<div style="position:absolute;left:48px;top:940px;width:1759px;height:10px;background:#fff"></div>
<div style="position:absolute;left:1842px;top:72px;width:73px;height:910px;background:#f0f0f0"></div>
<div style="position:absolute;left:1840px;top:72px;width:2px;height:910px;background:#e4e4e4"></div>
<svg style="position:absolute;left:1840px;top:0" width="75" height="982" viewBox="1840 0 75 982"><rect x="1846" y="77" width="1.6" height="1.6" fill="#a8a8a8"/><rect x="1849.9" y="77" width="1.6" height="1.6" fill="#a8a8a8"/><rect x="1853.8000000000002" y="77" width="1.6" height="1.6" fill="#a8a8a8"/><rect x="1857.7000000000003" y="77" width="1.6" height="1.6" fill="#a8a8a8"/><rect x="1861.6000000000004" y="77" width="1.6" height="1.6" fill="#a8a8a8"/><rect x="1865.5000000000005" y="77" width="1.6" height="1.6" fill="#a8a8a8"/><rect x="1869.4000000000005" y="77" width="1.6" height="1.6" fill="#a8a8a8"/><rect x="1873.3000000000006" y="77" width="1.6" height="1.6" fill="#a8a8a8"/><rect x="1877.2000000000007" y="77" width="1.6" height="1.6" fill="#a8a8a8"/><rect x="1881.1000000000008" y="77" width="1.6" height="1.6" fill="#a8a8a8"/><rect x="1885.000000000001" y="77" width="1.6" height="1.6" fill="#a8a8a8"/><rect x="1888.900000000001" y="77" width="1.6" height="1.6" fill="#a8a8a8"/><rect x="1892.800000000001" y="77" width="1.6" height="1.6" fill="#a8a8a8"/><rect x="1896.7000000000012" y="77" width="1.6" height="1.6" fill="#a8a8a8"/><rect x="1900.6000000000013" y="77" width="1.6" height="1.6" fill="#a8a8a8"/><rect x="1904.5000000000014" y="77" width="1.6" height="1.6" fill="#a8a8a8"/><rect x="1908.4000000000015" y="77" width="1.6" height="1.6" fill="#a8a8a8"/><defs><linearGradient id="clap" x1="0" y1="0" x2="1" y2="1"><stop offset="0" stop-color="#9a9a9a"/><stop offset="0.5" stop-color="#e8e8e8"/><stop offset="1" stop-color="#808080"/></linearGradient></defs><rect x="1863" y="99" width="28" height="17" fill="url(#clap)" stroke="#888" stroke-width="0.8"/><path d="M1863,97 L1890,91 L1891,96 L1864,102 Z" fill="#888"/><path d="M1868,96 l3,-4 M1874,95 l3,-4 M1880,94 l3,-4 M1886,92 l2,-3" stroke="#ddd" stroke-width="1.4"/><path d="M1877,124 V141" stroke="#aaa" stroke-width="1.6"/><path d="M1871,142 L1883,141 L1885,153 L1870,153 Z" fill="#c4c4c4" stroke="#999" stroke-width="0.8"/><rect x="1864.5" y="162.5" width="24" height="24" rx="3" fill="#fff" stroke="#3a3e4a" stroke-width="1.5"/><circle cx="1876.5" cy="174.5" r="9" fill="#fff" stroke="#3a3e4a" stroke-width="1.6"/><path d="M1882,169 L1876,175 L1878,177 Z" fill="#e83030"/><path d="M1871,180 L1876,175 L1878,177 Z" fill="#555"/><path d="M1877,199 Q1883,202 1889,203 Q1889,216 1877,222 Q1866,216 1866,203 Q1871,202 1877,199 Z" fill="#a8a8a8" stroke="#c8c8c8"/><path d="M1877,204 Q1881,206 1885,206 Q1885,214 1877,218 Q1870,214 1870,206 Q1873,206 1877,204 Z" fill="#8a8a8a"/><text x="1849" y="245" font-family="Liberation Sans" font-size="12.5" font-weight="normal" fill="#7a7a7a" >CSF Filter</text><path d="M1870,260 H1882" stroke="#555" stroke-width="1.2"/><path d="M1880,258 L1884,260 L1880,262 Z" fill="#555"/><text x="1869" y="280" font-family="Liberation Sans" font-size="14" font-weight="normal" fill="#555" >N</text><rect x="1866" y="295" width="23" height="22" fill="#fafafa"/><path d="M1868,303 Q1870,296 1877,297 Q1886,296 1887,303 L1885,310 L1870,310 Z" fill="#b0b0b0"/><text x="1869" y="316" font-family="Liberation Sans" font-size="6.5" font-weight="bold" fill="#444" >HPR</text><text x="1863" y="334" font-family="Liberation Sans" font-size="9" font-weight="bold" fill="#a0a0a0" letter-spacing="-0.4">M3C2</text><circle cx="1865" cy="343" r="1.3" fill="#666"/><circle cx="1869" cy="346" r="1.3" fill="#666"/><circle cx="1866" cy="351" r="1.3" fill="#666"/><circle cx="1872" cy="340" r="1.3" fill="#666"/><circle cx="1878" cy="342" r="1.3" fill="#666"/><circle cx="1884" cy="340" r="1.3" fill="#666"/><circle cx="1888" cy="344" r="1.3" fill="#666"/><circle cx="1890" cy="350" r="1.3" fill="#666"/><circle cx="1885" cy="352" r="1.3" fill="#666"/><circle cx="1876" cy="348" r="1.3" fill="#666"/><circle cx="1870" cy="353" r="1.3" fill="#666"/><circle cx="1882" cy="347" r="1.3" fill="#666"/><path d="M1866,344 Q1876,338 1889,343 M1867,352 Q1877,349 1889,352" fill="none" stroke="#999" stroke-width="1"/><path d="M1877,365 Q1883,368 1889,369 Q1889,383 1877,390 Q1866,383 1866,369 Q1871,368 1877,365 Z" fill="#a0a0a0" stroke="#c8c8c8"/><path d="M1877,370 Q1881,372 1885,372 Q1885,381 1877,385 Q1870,381 1870,372 Q1873,372 1877,370 Z" fill="#888"/><rect x="1867" y="403" width="21" height="21" fill="#9c9c9c"/><path d="M1868,404 l8,8 M1872,404 l9,9 M1878,404 l8,6" stroke="#c4c4c4" stroke-width="1.4"/><rect x="1867" y="415" width="21" height="9" fill="#8a8a8a"/><text x="1868" y="423" font-family="Liberation Sans" font-size="8" font-weight="bold" fill="#f0f0f0" >PCV</text><rect x="1866" y="438" width="22" height="22" fill="#f8f8f8"/><path d="M1877,440 L1887,447 L1884,458 L1870,458 L1867,447 Z" fill="#a8a8a8"/><path d="M1873,484 L1877,488 L1881,484 M1873,489 L1877,493 L1881,489" fill="none" stroke="#444" stroke-width="1.4"/><rect x="1842" y="495" width="73" height="1" fill="#c8c8c8"/><rect x="1846" y="501" width="1.6" height="1.6" fill="#a8a8a8"/><rect x="1849.9" y="501" width="1.6" height="1.6" fill="#a8a8a8"/><rect x="1853.8000000000002" y="501" width="1.6" height="1.6" fill="#a8a8a8"/><rect x="1857.7000000000003" y="501" width="1.6" height="1.6" fill="#a8a8a8"/><rect x="1861.6000000000004" y="501" width="1.6" height="1.6" fill="#a8a8a8"/><rect x="1865.5000000000005" y="501" width="1.6" height="1.6" fill="#a8a8a8"/><rect x="1869.4000000000005" y="501" width="1.6" height="1.6" fill="#a8a8a8"/><rect x="1873.3000000000006" y="501" width="1.6" height="1.6" fill="#a8a8a8"/><rect x="1877.2000000000007" y="501" width="1.6" height="1.6" fill="#a8a8a8"/><rect x="1881.1000000000008" y="501" width="1.6" height="1.6" fill="#a8a8a8"/><rect x="1885.000000000001" y="501" width="1.6" height="1.6" fill="#a8a8a8"/><rect x="1888.900000000001" y="501" width="1.6" height="1.6" fill="#a8a8a8"/><rect x="1892.800000000001" y="501" width="1.6" height="1.6" fill="#a8a8a8"/><rect x="1896.7000000000012" y="501" width="1.6" height="1.6" fill="#a8a8a8"/><rect x="1900.6000000000013" y="501" width="1.6" height="1.6" fill="#a8a8a8"/><rect x="1904.5000000000014" y="501" width="1.6" height="1.6" fill="#a8a8a8"/><rect x="1908.4000000000015" y="501" width="1.6" height="1.6" fill="#a8a8a8"/><circle cx="1877" cy="526" r="13.5" fill="#bdbdbd" stroke="#8a8a8a" stroke-width="2.5"/><circle cx="1877" cy="526" r="9" fill="#d8d8d8"/><path d="M1869,534 L1885,518" stroke="#8a8a8a" stroke-width="4"/><rect x="1867" y="551" width="21" height="22" fill="#9a9a9a"/><path d="M1873,554 q6,2 4,10 q5,-1 9,4" fill="none" stroke="#d0d0d0" stroke-width="1.5"/><rect x="1867" y="564" width="21" height="9" fill="#8a8a8a"/><text x="1868" y="572" font-family="Liberation Sans" font-size="7" font-weight="bold" fill="#f0f0f0" >EDL</text><rect x="1867" y="588" width="21" height="22" fill="#9a9a9a"/><path d="M1873,591 q6,2 4,10 q5,-1 9,4" fill="none" stroke="#d0d0d0" stroke-width="1.5"/><rect x="1867" y="601" width="21" height="9" fill="#8a8a8a"/><text x="1868" y="609" font-family="Liberation Sans" font-size="6" font-weight="bold" fill="#f0f0f0" >SSAO</text></svg>
<svg style="position:absolute;left:0;top:0" width="470" height="170" viewBox="0 0 470 170"><path d="M54.5,119.5 L65.5,119.5 L60,127.5 Z" fill="#5e4c4c"/><path d="M81,141.5 L88.5,147 L81,152.5 Z" fill="#5e4c4c"/><rect x="76.5" y="115.5" width="15" height="15" fill="#fff" stroke="#333" stroke-width="1"/><path d="M79.5,123 L83,126.5 L89,119.5" fill="none" stroke="#333" stroke-width="1.3"/><rect x="101.5" y="139.5" width="15" height="15" fill="#fff" stroke="#333" stroke-width="1"/><path d="M104.5,147 L108,150.5 L114,143.5" fill="none" stroke="#333" stroke-width="1.3"/><defs><linearGradient id="fg" x1="0" y1="0" x2="0" y2="1"><stop offset="0" stop-color="#f8d060"/><stop offset="1" stop-color="#c89a20"/></linearGradient></defs><path d="M99,117 Q99,114 102,114 L107,114 L109,117 L115,117 Q117,117 117,119 L117,130 Q117,132 115,132 L101,131 Q99,131 99,129 Z" fill="url(#fg)"/><path d="M100,121 L116,122 L116,130 L101,130 Z" fill="#e8b838"/><path d="M131,140 L138,145 L136,153 L127,154 L124,146 Z" fill="#e88a48" stroke="#8a4a20" stroke-width="1"/><path d="M131,140 L131,147 M138,145 L131,147 L136,153 M131,147 L127,154 M124,146 L131,147" fill="none" stroke="#6a3a18" stroke-width="0.8"/></svg>
<svg style="position:absolute;left:0;top:0" width="1915" height="982" viewBox="0 0 1915 982"><rect x="452.5" y="80.5" width="6" height="5.5" fill="none" stroke="#333" stroke-width="1.4"/><rect x="449.5" y="84.5" width="6" height="5.5" fill="#dadada" stroke="#333" stroke-width="1.4"/><rect x="452.5" y="456.5" width="6" height="5.5" fill="none" stroke="#333" stroke-width="1.4"/><rect x="449.5" y="460.5" width="6" height="5.5" fill="#dadada" stroke="#333" stroke-width="1.4"/><rect x="1798.5" y="798.5" width="6" height="5.5" fill="none" stroke="#333" stroke-width="1.4"/><rect x="1795.5" y="802.5" width="6" height="5.5" fill="#dadada" stroke="#333" stroke-width="1.4"/><path d="M1821,800 L1830,809 M1830,800 L1821,809" stroke="#333" stroke-width="1.8"/><rect x="1848.5" y="8.5" width="16" height="18" fill="#fafafa" stroke="#e4e4ea" stroke-width="0.6"/><rect x="1849" y="23" width="10" height="3" fill="#707884"/><rect x="1870.5" y="8.5" width="17" height="18" fill="#fafafa" stroke="#e4e4ea" stroke-width="0.6"/><rect x="1876" y="13" width="10" height="9" fill="none" stroke="#707884" stroke-width="2.4"/><rect x="1872" y="18" width="9" height="8" fill="#fafafa" stroke="#707884" stroke-width="2.4"/><rect x="1892.5" y="8.5" width="16" height="18" fill="#fafafa" stroke="#e4e4ea" stroke-width="0.6"/><path d="M1896,14 L1906,25 M1906,14 L1896,25" stroke="#707884" stroke-width="3"/><rect x="1848" y="28" width="61" height="2" fill="#9ca0b0"/><text x="-2" y="24" font-family="Liberation Sans" font-size="13" font-weight="bold" fill="#3a78b0">C</text><rect x="1807" y="829" width="21" height="121" fill="#f0f0f0"/><path d="M1813,845 L1817.5,840.5 L1822,845" fill="none" stroke="#505050" stroke-width="1.6"/><rect x="1808" y="906" width="18" height="22" fill="#cdcdcd"/><path d="M1813,936 L1817.5,940.5 L1822,936" fill="none" stroke="#505050" stroke-width="1.6"/><rect x="48" y="950" width="1780" height="21" fill="#f0f0f0"/><rect x="70" y="951" width="1118" height="18" fill="#cdcdcd"/><path d="M62,955 L57.5,959.5 L62,964" fill="none" stroke="#505050" stroke-width="1.6"/><path d="M1793,955 L1797.5,959.5 L1793,964" fill="none" stroke="#505050" stroke-width="1.6"/><rect x="1411" y="742.5" width="333" height="1.6" fill="#fff"/><rect x="1411" y="739" width="1.4" height="8" fill="#fff"/><rect x="1742.5" y="739" width="1.4" height="8" fill="#fff"/><text x="1568" y="767.5" font-family="Liberation Serif" font-size="16.5" fill="#fff">55</text><path d="M1792.2,742.7 V727" stroke="#3aaae8" stroke-width="3"/><path d="M1792.2,742.7 L1813.5,732.8" stroke="#30e030" stroke-width="3"/><path d="M1792.2,742.7 L1805,759" stroke="#e02020" stroke-width="3"/><text x="1787.5" y="720" font-family="Liberation Sans" font-size="13.5" fill="#3aa0e0">Z</text><text x="1816.5" y="730.5" font-family="Liberation Sans" font-size="13.5" fill="#30e030">Y</text><text x="1805.8" y="768.5" font-family="Liberation Sans" font-size="13.5" fill="#e02020">X</text></svg>
</body></html>
